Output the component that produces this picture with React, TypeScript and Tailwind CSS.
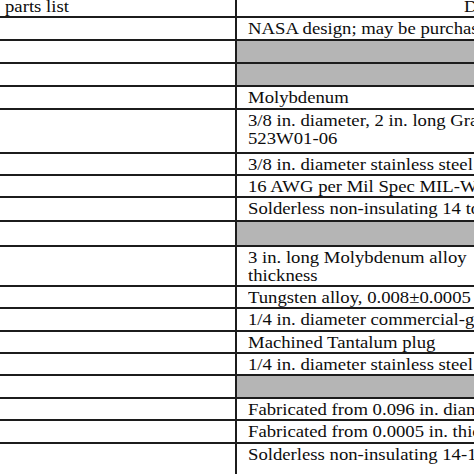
import React from 'react'

type Row = {
  h: number
  lines?: string[]
  gray?: boolean
}

// row heights include the 2px bottom rule
const rows: Row[] = [
  { h: 23.1, lines: ['NASA design; may be purchased from the Glenn Research Center'] },
  { h: 22.5, gray: true },
  { h: 22.8, gray: true },
  { h: 22.8, lines: ['Molybdenum'] },
  { h: 44.1, lines: ['3/8 in. diameter, 2 in. long Grainger part no. 4CT', '523W01-06'] },
  { h: 22.3, lines: ['3/8 in. diameter stainless steel'] },
  { h: 22.3, lines: ['16 AWG per Mil Spec MIL-W-16878/4 Type E'] },
  { h: 23.7, lines: ['Solderless non-insulating 14 to 16 AWG ring terminal'] },
  { h: 24.7, gray: true },
  { h: 40, lines: ['3 in. long Molybdenum alloy', 'thickness'] },
  { h: 22.6, lines: ['Tungsten alloy, 0.008\u00b10.0005 in. diameter wire'] },
  { h: 22.7, lines: ['1/4 in. diameter commercial-grade graphite rod'] },
  { h: 21.7, lines: ['Machined Tantalum plug'] },
  { h: 22.6, lines: ['1/4 in. diameter stainless steel'] },
  { h: 23, gray: true },
  { h: 21.7, lines: ['Fabricated from 0.096 in. diameter molybdenum wire'] },
  { h: 23.3, lines: ['Fabricated from 0.0005 in. thick tantalum foil'] },
  { h: 40, lines: ['Solderless non-insulating 14-16 AWG butt splice'] },
]

const stretch = 'inline-block origin-left scale-x-[1.1]'

export default function App() {
  return (
    <div className="w-[474px] h-[474px] overflow-hidden bg-white font-['Liberation_Serif',serif] text-[17px] leading-[18.5px] text-[#0d0d0d]">
      <div className="w-[720px]">
        {/* header */}
        <div className="flex h-[18.4px] border-b-2 border-[#1c1c1c]">
          <div className="w-[237px] shrink-0 border-r-2 border-[#1c1c1c] pl-[5px] -mt-[2px]">
            <span className={stretch}>parts list</span>
          </div>
          <div className="flex-1 pl-[227px] -mt-[2px]">
            <span className={stretch}>Description</span>
          </div>
        </div>

        {rows.map((row, i) => (
          <div
            key={i}
            className="flex border-b-2 border-[#1c1c1c]"
            style={{ height: `${row.h}px` }}
          >
            <div className="w-[237px] shrink-0 border-r-2 border-[#1c1c1c]" />
            <div
              className={`flex-1 overflow-hidden whitespace-nowrap pl-[11px] pt-[2px] ${
                row.gray ? 'bg-[#b5b5b5]' : ''
              }`}
            >
              {row.lines?.map((line, j) => (
                <div key={j}>
                  <span className={stretch}>{line}</span>
                </div>
              ))}
            </div>
          </div>
        ))}
      </div>
    </div>
  )
}
